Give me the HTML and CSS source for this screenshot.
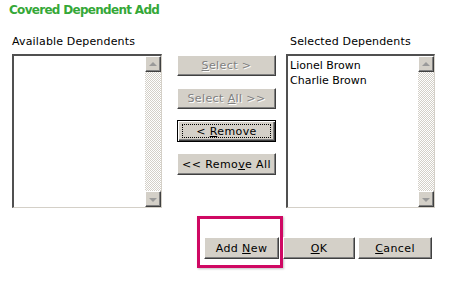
FILE: index.html
```html
<!DOCTYPE html>
<html>
<head>
<meta charset="utf-8">
<link rel="stylesheet" href="styles.css">
</head>
<body>
<div class="page">
  <div class="title">Covered Dependent Add</div>
  <div class="main">
    <div class="col col-left">
      <div class="label">Available Dependents</div>
      <div class="listbox lb-left">
        <div class="items"></div>
        <div class="sbar">
          <div class="sbtn"><span class="arrow up"></span></div>
          <div class="track"></div>
          <div class="sbtn"><span class="arrow down"></span></div>
        </div>
      </div>
    </div>
    <div class="mid">
      <div class="btn disabled b-first"><span><u>S</u>elect &gt;</span></div>
      <div class="btn disabled"><span>Select <u>A</u>ll &gt;&gt;</span></div>
      <div class="btn default"><div class="focus"><span>&lt; <u>R</u>emove</span></div></div>
      <div class="btn b-tall"><span>&lt;&lt; Remo<u>v</u>e All</span></div>
    </div>
    <div class="col col-right">
      <div class="label">Selected Dependents</div>
      <div class="listbox lb-right">
        <div class="items">
          <div class="item">Lionel Brown</div>
          <div class="item">Charlie Brown</div>
        </div>
        <div class="sbar">
          <div class="sbtn"><span class="arrow up"></span></div>
          <div class="track"></div>
          <div class="sbtn"><span class="arrow down"></span></div>
        </div>
      </div>
    </div>
  </div>
  <div class="actions">
    <div class="btn b-add"><span>Add <u>N</u>ew</span><div class="highlight"></div></div>
    <div class="btn b-ok"><span><u>O</u>K</span></div>
    <div class="btn b-cancel"><span><u>C</u>ancel</span></div>
  </div>
</div>
</body>
</html>
```

FILE: styles.css
```css
html, body {
  margin: 0;
  padding: 0;
  background: #ffffff;
}
body {
  font-family: "DejaVu Sans", Verdana, sans-serif;
  font-size: 11px;
  color: #000;
}
.page {
  width: 451px;
  height: 281px;
  position: relative;
}
.title {
  font-family: "DejaVu Sans", sans-serif;
  font-weight: bold;
  font-size: 12px;
  letter-spacing: -0.7px;
  color: #35a838;
  padding: 3px 0 0 9px;
  height: 17px;
  line-height: 15px;
}
.main {
  display: flex;
  padding-left: 12px;
  margin-top: 14px;
}
.col {
  display: flex;
  flex-direction: column;
}
.label {
  height: 20px;
  line-height: 15px;
  letter-spacing: 0.15px;
}
.col-right .label {
  padding-left: 4px;
}
.listbox {
  display: flex;
  height: 154px;
  box-sizing: border-box;
  border-top: 2px solid #505050;
  border-left: 2px solid #505050;
  border-bottom: 1px solid #d4d0c8;
  border-right: 1px solid #d4d0c8;
  background: #fff;
}
.lb-left { width: 150px; }
.lb-right { width: 149px; }
.items {
  flex: 1;
  padding: 2px 0 0 2px;
}
.item {
  height: 15px;
  line-height: 15px;
}
.sbar {
  width: 16px;
  display: flex;
  flex-direction: column;
}
.track {
  flex: 1;
  background-color: #ffffff;
  background-image: repeating-conic-gradient(#d4d0c8 0 25%, #ffffff 0 50%);
  background-size: 2px 2px;
}
.sbtn {
  height: 16px;
  box-sizing: border-box;
  background: #d4d0c8;
  border-top: 1px solid #ffffff;
  border-left: 1px solid #ffffff;
  border-bottom: 1px solid #404040;
  border-right: 1px solid #404040;
  box-shadow: inset -1px -1px #808080;
  display: flex;
  align-items: center;
  justify-content: center;
}
.arrow {
  width: 0;
  height: 0;
  border-left: 4px solid transparent;
  border-right: 4px solid transparent;
}
.arrow.up {
  border-bottom: 4px solid #9a9a9a;
  margin-top: -1px;
}
.arrow.down {
  border-top: 4px solid #9a9a9a;
  margin-top: 1px;
}
.mid {
  display: flex;
  flex-direction: column;
  gap: 11px;
  margin-left: 15px;
  margin-right: 10px;
  padding-top: 21px;
  width: 99px;
}
.btn {
  height: 21px;
  box-sizing: border-box;
  background: #d4d0c8;
  border-top: 1px solid #ffffff;
  border-left: 1px solid #ffffff;
  border-bottom: 1px solid #404040;
  border-right: 1px solid #404040;
  box-shadow: inset -1px -1px #808080;
  display: flex;
  align-items: center;
  justify-content: center;
  letter-spacing: 0.4px;
  position: relative;
}
.b-first {
  margin-bottom: 1px;
}
.b-tall {
  height: 22px;
}
.btn.disabled {
  color: #808080;
  text-shadow: 1px 1px 0 #ffffff;
}
.btn.default {
  height: 22px;
  border: 1px solid #000;
  box-shadow: inset 1px 1px #ffffff, inset -1px -1px #404040, inset -2px -2px #808080;
}
.focus {
  border: 1px dotted #000;
  width: 89px;
  height: 14px;
  box-sizing: border-box;
  display: flex;
  align-items: center;
  justify-content: center;
}
.actions {
  display: flex;
  gap: 3px;
  padding-left: 204px;
  margin-top: 29px;
}
.actions .btn {
  height: 22px;
}
.b-add { width: 75px; }
.b-ok { width: 72px; margin-left: 1px; }
.b-cancel { width: 74px; }
.highlight {
  position: absolute;
  left: -8px;
  top: -22px;
  width: 86px;
  height: 52px;
  box-sizing: border-box;
  border: 3px solid #cf0863;
  box-shadow: 1px 1px 2px rgba(0,0,0,0.25);
  pointer-events: none;
}
```
